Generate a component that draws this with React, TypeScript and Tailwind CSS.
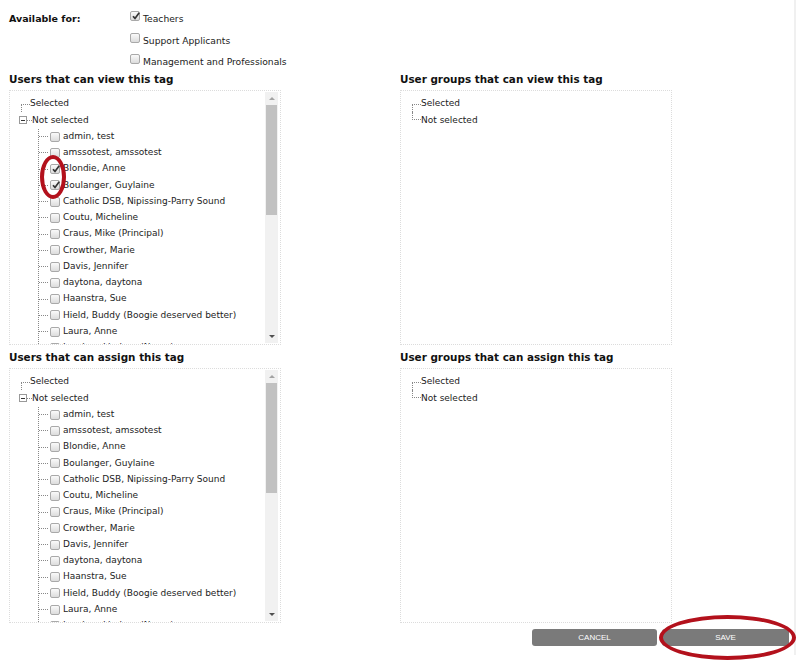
import React from 'react'

const USERS = [
  'admin, test',
  'amssotest, amssotest',
  'Blondie, Anne',
  'Boulanger, Guylaine',
  'Catholic DSB, Nipissing-Parry Sound',
  'Coutu, Micheline',
  'Craus, Mike (Principal)',
  'Crowther, Marie',
  'Davis, Jennifer',
  'daytona, daytona',
  'Haanstra, Sue',
  'Hield, Buddy (Boogie deserved better)',
  'Laura, Anne',
  'Lamber, Lindsay (Nurse)',
]

function Box({ checked = false }: { checked?: boolean }) {
  return (
    <span className="relative inline-flex h-[10px] w-[10px] shrink-0 items-center justify-center rounded-[2px] border border-[#a9a9a9] bg-gradient-to-b from-[#fafafa] to-[#dcdcdc]">
      {checked ? (
        <svg viewBox="0 0 10 10" className="absolute -top-[1px] left-[0px] h-[10px] w-[10px]">
          <path d="M2 5.2 L4 7.4 L8.2 1.8" fill="none" stroke="#333" strokeWidth="1.7" />
        </svg>
      ) : null}
    </span>
  )
}

function Heading({ children }: { children: React.ReactNode }) {
  return <h3 className="h-[19px] pt-[1px] text-[10.4px] leading-[14px] font-bold text-[#111]">{children}</h3>
}

function UserTree({ checked = [] }: { checked?: number[] }) {
  return (
    <div className="flex h-[255px] w-[272px] border border-dotted border-[#dcdcdc]">
      <div className="flex-1 overflow-hidden pl-[9px] pt-[5px]">
        <div className="flex h-[16.25px] items-center">
          <span className="ml-[2px] h-[8px] w-[9px] self-end border-l border-t border-dotted border-[#888]" />
          <span className="-mt-[1px]">Selected</span>
        </div>
        <div className="flex h-[16.25px] items-center">
          <span className="flex h-[8px] w-[8px] items-center justify-center border border-[#999] bg-white">
            <span className="h-px w-[4px] bg-[#333]" />
          </span>
          <span className="w-[5px] border-t border-dotted border-[#888]" />
          <span>Not selected</span>
        </div>
        <div className="ml-[19px] border-l border-dotted border-[#888]">
          {USERS.map((name, i) => (
            <div key={name} className="flex h-[16.25px] items-center">
              <span className="mr-[2px] w-[9px] border-t border-dotted border-[#888]" />
              <Box checked={checked.includes(i)} />
              <span className="ml-[3px] whitespace-nowrap">{name}</span>
            </div>
          ))}
        </div>
      </div>
      <div className="my-[1px] mr-[2px] flex w-[13px] flex-col bg-[#f1f1f1]">
        <div className="flex h-[13px] items-center justify-center">
          <span className="border-x-[3px] border-b-[3px] border-x-transparent border-b-[#a3a3a3]" />
        </div>
        <div className="mx-[1px] h-[110px] bg-[#c1c1c1]" />
        <div className="flex-1" />
        <div className="flex h-[13px] items-center justify-center">
          <span className="border-x-[3px] border-t-[3px] border-x-transparent border-t-[#505050]" />
        </div>
      </div>
    </div>
  )
}

function GroupTree() {
  return (
    <div className="h-[255px] w-[272px] border border-dotted border-[#dcdcdc] pl-[11px] pt-[5px]">
      <div className="flex h-[16.25px] items-center">
        <span className="h-[8px] w-[9px] self-end border-l border-t border-dotted border-[#888]" />
        <span className="-mt-[1px]">Selected</span>
      </div>
      <div className="flex h-[16.25px] items-center">
        <span className="mb-[8px] h-[8px] w-[9px] border-b border-l border-dotted border-[#888]" />
        <span>Not selected</span>
      </div>
    </div>
  )
}

export default function App() {
  return (
    <div className="relative h-[660px] w-[805px] overflow-hidden bg-white font-['DejaVu_Sans',Verdana,sans-serif] text-[9px] text-[#222]">
      <div className="h-[655px] w-[796px] border-r-2 border-[#f0f0f0] pl-[9px] pt-[11px]">
        <div className="flex">
          <div className="w-[121px] pt-[1px] text-[9.5px] font-bold text-[#111]">Available for:</div>
          <div className="flex flex-col gap-[10.5px] text-[9.2px]">
            <label className="flex h-[11px] items-start gap-[3px]">
              <Box checked />
              <span className="mt-[1px]">Teachers</span>
            </label>
            <label className="flex h-[11px] items-start gap-[3px]">
              <Box />
              <span className="mt-[1px]">Support Applicants</span>
            </label>
            <label className="flex h-[11px] items-start gap-[3px]">
              <Box />
              <span className="mt-[1px]">Management and Professionals</span>
            </label>
          </div>
        </div>

        <div className="mt-[6px] grid grid-cols-[391px_272px]">
          <div>
            <Heading>Users that can view this tag</Heading>
            <UserTree checked={[2, 3]} />
          </div>
          <div>
            <Heading>User groups that can view this tag</Heading>
            <GroupTree />
          </div>
          <div className="mt-[4px]">
            <Heading>Users that can assign this tag</Heading>
            <UserTree />
          </div>
          <div className="mt-[4px]">
            <Heading>User groups that can assign this tag</Heading>
            <GroupTree />
          </div>
        </div>

        <div className="mt-[6px] flex justify-end gap-[5px] pr-[5px]">
          <button className="h-[17px] w-[125px] rounded-[3px] bg-[#7a7a7a] font-['Liberation_Sans',Arial,sans-serif] text-[8px] text-white">
            CANCEL
          </button>
          <button className="h-[17px] w-[127px] rounded-[3px] bg-[#7a7a7a] font-['Liberation_Sans',Arial,sans-serif] text-[8px] text-white">
            SAVE
          </button>
        </div>
      </div>

      <span className="pointer-events-none absolute left-[40px] top-[155px] h-[44px] w-[26px] rounded-[50%] border-[4px] border-[#b3111c]" />
      <span className="pointer-events-none absolute left-[659px] top-[615px] h-[45px] w-[137px] rounded-[50%] border-[4px] border-[#b3111c]" />
    </div>
  )
}
